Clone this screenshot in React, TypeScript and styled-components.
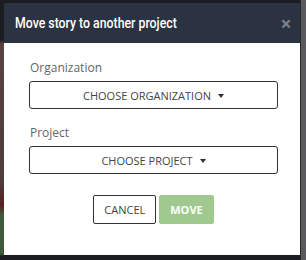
import styled, { createGlobalStyle } from "styled-components";

const GlobalStyle = createGlobalStyle`
  html, body {
    margin: 0;
    padding: 0;
    background: #1f1f22;
  }
`;

const Backdrop = styled.div`
  width: 306px;
  height: 260px;
  box-sizing: border-box;
  padding: 3px 6px 5px 4px;
  display: flex;
  background:
    linear-gradient(
        to bottom,
        #1c1d22 0px,
        #1c1d22 40px,
        #5b4142 44px,
        #4e3d3f 180px,
        #5a1e22 205px,
        #3f5a3b 215px,
        #3f5a3b 254px,
        #1c1d22 256px
      )
      left top / 4px 100% no-repeat,
    linear-gradient(to right, #2a2a2d 0 1px, #5a5a5c 1px) right top / 6px 100%
      no-repeat,
    #1c1d22;
`;

const Modal = styled.div`
  flex: 1;
  display: flex;
  flex-direction: column;
  background: #ffffff;
  font-family: "Open Sans", "Liberation Sans", sans-serif;
`;

const Header = styled.div`
  height: 40px;
  display: flex;
  align-items: center;
  justify-content: space-between;
  padding: 0 9px 0 11px;
  background: #2b3241;
`;

// the picture uses a condensed face, so squeeze Roboto to its width
const Title = styled.h4`
  margin: 0;
  font-family: Roboto, "Liberation Sans", sans-serif;
  font-weight: 500;
  font-size: 15px;
  color: #ffffff;
  white-space: nowrap;
  transform: scaleX(0.82);
  transform-origin: left center;
`;

const Close = styled.span`
  font-family: Roboto, "Liberation Sans", sans-serif;
  font-weight: 700;
  font-size: 19px;
  line-height: 1;
  color: #7b808a;
`;

const Body = styled.div`
  display: flex;
  flex-direction: column;
  padding: 16px 22px 30px 25px;
`;

const Field = styled.div`
  display: flex;
  flex-direction: column;
  gap: 4px;
  margin-bottom: 15px;
`;

const Label = styled.label`
  font-size: 12px;
  line-height: 18px;
  color: #666666;
  padding-left: 1px;
`;

const Select = styled.button`
  height: 28px;
  display: flex;
  align-items: center;
  justify-content: center;
  gap: 7px;
  border: 1px solid #333333;
  border-radius: 3px;
  background: #ffffff;
  font-family: "Open Sans", "Liberation Sans", sans-serif;
  font-size: 11px;
  color: #444444;
  text-transform: uppercase;
`;

const Caret = styled.span`
  width: 0;
  height: 0;
  border-left: 3.5px solid transparent;
  border-right: 3.5px solid transparent;
  border-top: 4px solid #333333;
  margin-top: 1px;
`;

const Actions = styled.div`
  display: flex;
  justify-content: center;
  gap: 3px;
  margin-top: 6px;
`;

const Button = styled.button<{ $primary?: boolean }>`
  height: 29px;
  padding: 0 10px;
  border-radius: 2px;
  font-family: "Open Sans", "Liberation Sans", sans-serif;
  font-size: 11px;
  text-transform: uppercase;
  border: 1px solid ${(p) => (p.$primary ? "#9fc98f" : "#333333")};
  background: ${(p) => (p.$primary ? "#9fc98f" : "#ffffff")};
  color: ${(p) => (p.$primary ? "#ffffff" : "#444444")};
  font-weight: ${(p) => (p.$primary ? 700 : 400)};
`;

export default function App() {
  return (
    <>
      <GlobalStyle />
      <Backdrop>
        <Modal>
          <Header>
            <Title>Move story to another project</Title>
            <Close>×</Close>
          </Header>
          <Body>
            <Field>
              <Label>Organization</Label>
              <Select>
                Choose organization
                <Caret />
              </Select>
            </Field>
            <Field>
              <Label>Project</Label>
              <Select>
                Choose project
                <Caret />
              </Select>
            </Field>
            <Actions>
              <Button>Cancel</Button>
              <Button $primary>Move</Button>
            </Actions>
          </Body>
        </Modal>
      </Backdrop>
    </>
  );
}
